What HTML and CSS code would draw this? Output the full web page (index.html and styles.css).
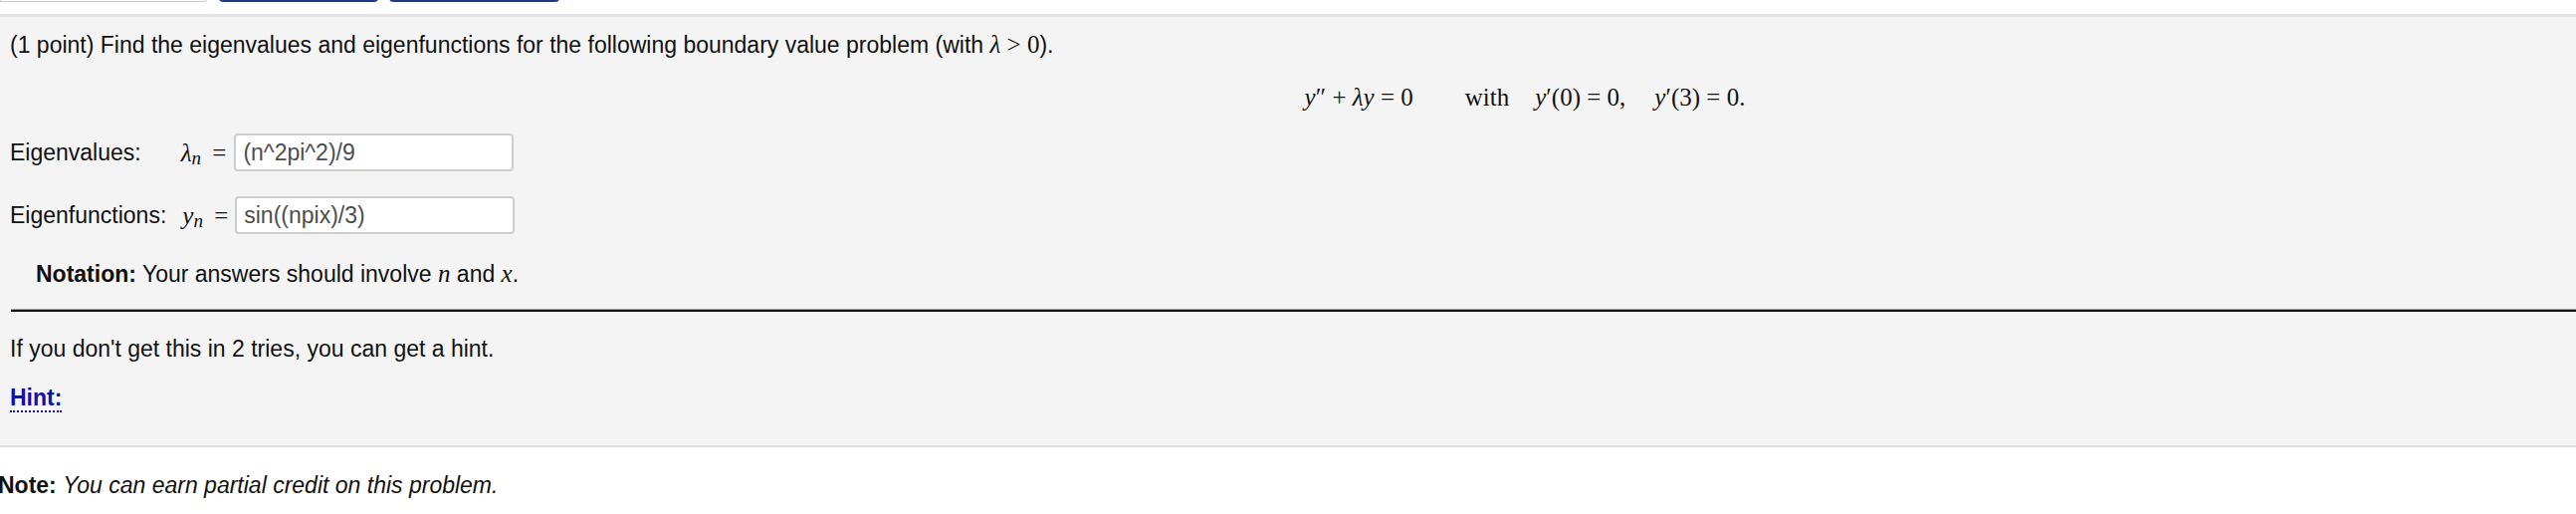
FILE: index.html
```html
<!DOCTYPE html>
<html>
<head>
<meta charset="utf-8">
<link rel="stylesheet" href="styles.css">
</head>
<body>
<div class="toolbar">
  <span class="tb-field"></span>
  <span class="tb-btn"></span>
  <span class="tb-btn tb-btn-wide"></span>
</div>
<div class="problem">
  <p class="title">(1 point) Find the eigenvalues and eigenfunctions for the following boundary value problem (with <span class="m"><i>λ</i> &gt; 0</span>).</p>
  <div class="display">
    <span class="m seg"><i>y</i>″ + <i>λy</i> = 0</span>
    <span class="m seg with">with</span>
    <span class="m seg s3"><i>y</i>′(0) = 0,</span>
    <span class="m seg s4"><i>y</i>′(3) = 0.</span>
  </div>
  <div class="row">
    <span class="label">Eigenvalues:</span>
    <span class="m var v1"><i>λ</i><sub><i>n</i></sub> =</span>
    <input class="ans" type="text" value="(n^2pi^2)/9" readonly>
  </div>
  <div class="row row2">
    <span class="label">Eigenfunctions:</span>
    <span class="m var v2"><i>y</i><sub><i>n</i></sub> =</span>
    <input class="ans" type="text" value="sin((npix)/3)" readonly>
  </div>
  <p class="notation"><b>Notation:</b> Your answers should involve <span class="m"><i>n</i></span> and <span class="m"><i>x</i></span>.</p>
  <hr class="rule">
  <p class="tries">If you don't get this in 2 tries, you can get a hint.</p>
  <p class="hint"><a class="hint-link">Hint:</a></p>
</div>
<p class="note"><b>Note:</b> <em>You can earn partial credit on this problem.</em></p>
</body>
</html>
```

FILE: styles.css
```css
html, body {
  margin: 0;
  padding: 0;
  overflow: hidden;
  background: #ffffff;
}
body {
  font-family: "Liberation Sans", Arial, sans-serif;
  font-size: 23px;
  line-height: 32px;
  color: #111111;
  width: 3064px;
}
p { margin: 0; }

.toolbar {
  display: flex;
  height: 2px;
  margin-bottom: 12px;
  overflow: hidden;
}
.toolbar span {
  display: block;
  height: 30px;
  margin-top: -28px;
  box-sizing: border-box;
}
.tb-field {
  width: 209px;
  border: 1px solid #c9c9c9;
  border-radius: 0 0 4px 0;
  background: #fff;
}
.tb-btn {
  width: 160px;
  margin-left: 11px;
  border: 2px solid #1c3a86;
  border-radius: 4px;
  background: #fff;
}
.tb-btn-wide { width: 171px; }

.problem {
  background: #f4f4f4;
  border-top: 3px solid #e2e2e2;
  border-bottom: 2px solid #dedede;
  padding: 12px 10px 32px 10px;
}

.m {
  font-family: "Liberation Serif", "Times New Roman", serif;
  font-size: 25px;
  line-height: 1;
}
.m i { font-style: italic; }

.display {
  display: flex;
  justify-content: center;
  margin-top: 20px;
  height: 32px;
  align-items: center;
}
.seg { white-space: pre; }
.with { margin-left: 52px; }
.s3 { margin-left: 26px; }
.s4 { margin-left: 29px; }

.row {
  display: flex;
  align-items: center;
  margin-top: 21px;
  height: 38px;
}
.row2 { margin-top: 25px; }
.label { white-space: nowrap; }
.var { white-space: nowrap; margin-right: 8px; }
.v1 { margin-left: 40px; }
.v2 { margin-left: 16px; margin-right: 7px; }
.var sub {
  font-size: 19px;
  vertical-align: -3px;
  line-height: 0;
  margin-right: 5px;
}
.ans {
  width: 281px;
  height: 38px;
  box-sizing: border-box;
  border: 2px solid #cdcdcd;
  border-radius: 4px;
  background: #ffffff;
  font-family: "Liberation Sans", Arial, sans-serif;
  font-size: 23px;
  color: #4d4d4d;
  padding: 0 7px;
  margin: 0;
  outline: none;
}

.notation {
  margin-top: 24px;
  padding-left: 26px;
}

.rule {
  margin: 19px 0 0 1px;
  height: 0;
  border: 0;
  border-top: 1px solid #9a9a9a;
  border-bottom: 2px solid #161616;
}

.tries { margin-top: 21px; }
.hint { margin-top: 17px; }
.hint-link {
  color: #0f12a8;
  font-weight: bold;
  text-decoration: none;
  border-bottom: 2px dotted #0f12a8;
  padding-bottom: 0;
  line-height: 26px;
  display: inline-block;
}

.note {
  margin: 22px 0 0 -2px;
}
.note em { font-style: italic; }
```
